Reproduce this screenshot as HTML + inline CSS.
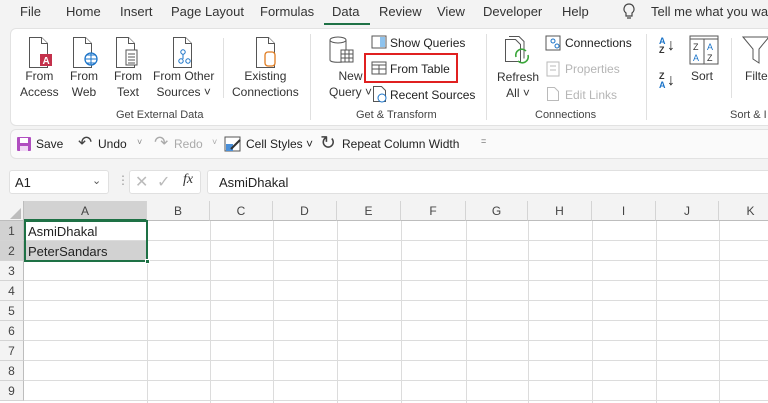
<!DOCTYPE html>
<html><head><meta charset="utf-8"><style>
*{margin:0;padding:0;box-sizing:border-box}
body{width:768px;height:403px;overflow:hidden;background:#f3f3f3;font-family:"Liberation Sans",sans-serif;color:#222;position:relative;font-size:12px}
.a{position:absolute;white-space:nowrap}
.tab{top:4px;font-size:13px;color:#333}
.rb{position:absolute;left:10px;top:28px;width:770px;height:98px;background:#fff;border:1px solid #e2e2e2;border-radius:6px}
.lbl{font-size:12px;color:#333;text-align:center;line-height:16px}
.grp{font-size:11px;color:#444}
.sep{position:absolute;width:1px;background:#e0e0e0}
.ic{position:absolute}
.col{position:absolute;top:201px;height:20px;border-right:1px solid #d4d4d4;text-align:center;font-size:12px;line-height:20px;color:#444;background:#f3f3f3;border-bottom:1px solid #bdbdbd}
.rh{position:absolute;left:0;width:24px;height:20px;text-align:center;font-size:12px;line-height:20px;color:#444;background:#f3f3f3;border-bottom:1px solid #d4d4d4;border-right:1px solid #bdbdbd}
</style></head><body>
<div class="a tab" style="left:20px">File</div>
<div class="a tab" style="left:66px">Home</div>
<div class="a tab" style="left:120px">Insert</div>
<div class="a tab" style="left:171px">Page Layout</div>
<div class="a tab" style="left:260px">Formulas</div>
<div class="a tab" style="left:332px">Data</div>
<div class="a" style="left:324px;top:23px;width:46px;height:2px;background:#1e7145"></div>
<div class="a tab" style="left:379px">Review</div>
<div class="a tab" style="left:437px">View</div>
<div class="a tab" style="left:483px">Developer</div>
<div class="a tab" style="left:562px">Help</div>
<svg class="ic" style="left:622px;top:3px" width="14" height="18"><path d="M7 1a5 5 0 0 0-3 9v3h6v-3a5 5 0 0 0-3-9zM5 15h4" fill="none" stroke="#444" stroke-width="1.2"/></svg>
<div class="a tab" style="left:651px">Tell me what you wa</div>

<div class="rb"></div>
<!-- doc icons -->
<svg class="ic" style="left:28px;top:36px" width="260" height="34">
<g fill="#fff" stroke="#555" stroke-width="1">
<path d="M1.5 1.5h12l6 6v24h-18z"/><path d="M13.5 1.5v6h6"/>
<path d="M45.5 1.5h12l6 6v24h-18z"/><path d="M57.5 1.5v6h6"/>
<path d="M88.5 1.5h12l6 6v24h-18z"/><path d="M100.5 1.5v6h6"/>
<path d="M145.5 1.5h12l6 6v24h-18z"/><path d="M157.5 1.5v6h6"/>
<path d="M228.5 1.5h12l6 6v24h-18z"/><path d="M240.5 1.5v6h6"/>
</g>
<rect x="12" y="18" width="12" height="12" fill="#c4314b"/><text x="14.5" y="28" font-size="10" fill="#fff" font-family="Liberation Sans" font-weight="bold">A</text>
<circle cx="63" cy="23" r="6" fill="#fff" stroke="#1a73c8" stroke-width="1.3"/><path d="M57 23h12M63 17v12M59 19h8M59 27h8" stroke="#1a73c8" fill="none"/>
<rect x="98" y="14" width="11" height="15" fill="#fff" stroke="#555"/><path d="M100 18h7M100 21h7M100 24h7M100 27h7" stroke="#555"/>
<circle cx="155" cy="16" r="2.2" fill="none" stroke="#1a73c8"/><circle cx="153" cy="25" r="2.2" fill="none" stroke="#1a73c8"/><circle cx="160" cy="25" r="2.2" fill="none" stroke="#1a73c8"/><path d="M155 18v5" stroke="#1a73c8"/>
<rect x="237" y="16" width="10" height="14" rx="3" fill="#fff" stroke="#e07b1f" stroke-width="1.3"/>
</svg>
<div class="a lbl" style="left:20px;top:68px">From<br>Access</div>
<div class="a lbl" style="left:70px;top:68px">From<br>Web</div>
<div class="a lbl" style="left:114px;top:68px">From<br>Text</div>
<div class="a lbl" style="left:153px;top:68px">From Other<br>Sources ˅</div>
<div class="sep" style="left:223px;top:38px;height:60px"></div>
<div class="a lbl" style="left:232px;top:68px">Existing<br>Connections</div>
<div class="a grp" style="left:116px;top:109px">Get External Data</div>
<div class="sep" style="left:310px;top:34px;height:86px"></div>
<!-- Get & transform -->
<svg class="ic" style="left:328px;top:35px" width="30" height="34"><path d="M2 5v20c0 3 16 3 16 0V5" fill="#fff" stroke="#555"/><ellipse cx="10" cy="5" rx="8" ry="3" fill="#fff" stroke="#555"/><rect x="13" y="15" width="12" height="12" fill="#fff" stroke="#555"/><path d="M13 19h12M13 23h12M17 15v12M21 15v12" stroke="#555"/></svg>
<div class="a lbl" style="left:329px;top:68px">New<br>Query ˅</div>
<svg class="ic" style="left:371px;top:35px" width="16" height="14"><rect x="1" y="1" width="14" height="12" fill="#fff" stroke="#555"/><rect x="9" y="2" width="5" height="10" fill="#8ec3ee"/></svg>
<div class="a" style="left:390px;top:36px;font-size:12px">Show Queries</div>
<svg class="ic" style="left:371px;top:61px" width="16" height="14"><rect x="1" y="1" width="14" height="12" fill="#fff" stroke="#555"/><path d="M1 4h14M1 8h14M8 4v9" stroke="#555"/></svg>
<div class="a" style="left:390px;top:62px;font-size:12px">From Table</div>
<div class="a" style="left:364px;top:53px;width:94px;height:30px;border:2px solid #e02020"></div>
<svg class="ic" style="left:372px;top:85px" width="16" height="18"><path d="M1.5 1.5h8l4 4v11h-12z" fill="#fff" stroke="#555"/><circle cx="10" cy="13" r="4" fill="#fff" stroke="#1a73c8"/></svg>
<div class="a" style="left:390px;top:88px;font-size:12px">Recent Sources</div>
<div class="a grp" style="left:356px;top:109px">Get &amp; Transform</div>
<div class="sep" style="left:486px;top:34px;height:86px"></div>
<!-- connections -->
<svg class="ic" style="left:503px;top:35px" width="30" height="34"><path d="M2.5 4.5h10l5 5v17h-15z" fill="#fff" stroke="#555"/><path d="M6 1.5h10l5 5v17" fill="none" stroke="#555"/><path d="M13 22a6 6 0 0 1 10-6M25 20a6 6 0 0 1-10 6" fill="none" stroke="#3aa63a" stroke-width="1.6"/></svg>
<div class="a lbl" style="left:497px;top:69px">Refresh<br>All ˅</div>
<svg class="ic" style="left:545px;top:35px" width="16" height="16"><rect x="1" y="1" width="14" height="14" fill="#fff" stroke="#555"/><circle cx="8" cy="6" r="2" fill="none" stroke="#1a73c8"/><circle cx="12" cy="11" r="2" fill="none" stroke="#1a73c8"/></svg>
<div class="a" style="left:565px;top:36px;font-size:12px">Connections</div>
<svg class="ic" style="left:546px;top:61px" width="14" height="16" opacity=".4"><rect x="1" y="1" width="12" height="14" fill="#fff" stroke="#555"/><path d="M4 5h6M4 9h6" stroke="#555"/></svg>
<div class="a" style="left:565px;top:62px;font-size:12px;color:#b5b5b5">Properties</div>
<svg class="ic" style="left:546px;top:86px" width="14" height="16" opacity=".4"><path d="M1.5 1.5h7l4 4v9h-11z" fill="#fff" stroke="#555"/></svg>
<div class="a" style="left:565px;top:88px;font-size:12px;color:#b5b5b5">Edit Links</div>
<div class="a grp" style="left:535px;top:109px">Connections</div>
<div class="sep" style="left:646px;top:34px;height:86px"></div>
<!-- sort -->
<div class="a" style="left:659px;top:37px;font-size:9px;line-height:9px;color:#1a73c8;font-weight:bold">A<br><span style="color:#333">Z</span></div>
<div class="a" style="left:667px;top:37px;font-size:16px">↓</div>
<div class="a" style="left:659px;top:72px;font-size:9px;line-height:9px;color:#333;font-weight:bold">Z<br><span style="color:#1a73c8">A</span></div>
<div class="a" style="left:667px;top:72px;font-size:16px">↓</div>
<svg class="ic" style="left:689px;top:35px" width="30" height="30"><rect x="1" y="1" width="28" height="28" fill="#fff" stroke="#555"/><path d="M1 4h28M15 4v25" stroke="#555"/><text x="4" y="15" font-size="9" fill="#333">Z</text><text x="4" y="26" font-size="9" fill="#1a73c8">A</text><text x="18" y="15" font-size="9" fill="#1a73c8">A</text><text x="18" y="26" font-size="9" fill="#333">Z</text></svg>
<div class="a lbl" style="left:691px;top:68px">Sort</div>
<div class="sep" style="left:731px;top:38px;height:60px"></div>
<svg class="ic" style="left:742px;top:35px" width="30" height="30"><path d="M1 2h26l-10 12v14l-6-4V14z" fill="#fff" stroke="#555"/></svg>
<div class="a lbl" style="left:745px;top:68px">Filte</div>
<div class="a grp" style="left:730px;top:109px">Sort &amp; I</div>

<!-- QAT -->
<div class="a" style="left:10px;top:129px;width:770px;height:30px;background:#fafafa;border:1px solid #e2e2e2;border-radius:6px"></div>
<svg class="ic" style="left:16px;top:136px" width="16" height="16"><rect x="1" y="1" width="14" height="14" rx="1" fill="#b04ec0"/><rect x="4" y="2" width="8" height="5" fill="#fff"/><rect x="4" y="10" width="8" height="5" fill="#f0d8f5"/></svg>
<div class="a" style="left:36px;top:137px">Save</div>
<div class="a" style="left:78px;top:133px;font-size:17px;color:#444">↶</div>
<div class="a" style="left:98px;top:137px">Undo</div>
<div class="a" style="left:137px;top:137px;font-size:9px;color:#888">˅</div>
<div class="a" style="left:154px;top:133px;font-size:17px;color:#aaa">↷</div>
<div class="a" style="left:174px;top:137px;color:#aaa">Redo</div>
<div class="a" style="left:212px;top:137px;font-size:9px;color:#aaa">˅</div>
<svg class="ic" style="left:224px;top:136px" width="18" height="17"><rect x="1" y="1" width="15" height="14" fill="#fff" stroke="#555"/><rect x="2" y="8" width="7" height="7" fill="#4a8fd8"/><path d="M7 13l9-9" stroke="#333" stroke-width="2"/></svg>
<div class="a" style="left:246px;top:137px">Cell Styles ˅</div>
<div class="a" style="left:320px;top:132px;font-size:19px;color:#444">↻</div>
<div class="a" style="left:342px;top:137px">Repeat Column Width</div>
<div class="a" style="left:481px;top:136px;font-size:9px;color:#666">=<br></div>

<!-- formula bar -->
<div class="a" style="left:9px;top:170px;width:100px;height:24px;background:#fff;border:1px solid #e0e0e0;border-radius:3px"></div>
<div class="a" style="left:15px;top:175px;font-size:13px">A1</div>
<div class="a" style="left:92px;top:174px;font-size:11px;color:#555">⌄</div>
<div class="a" style="left:117px;top:173px;color:#999">⋮</div>
<div class="a" style="left:129px;top:170px;width:72px;height:24px;background:#fff;border:1px solid #e0e0e0;border-radius:3px"></div>
<div class="a" style="left:135px;top:172px;font-size:16px;color:#bbb">✕</div>
<div class="a" style="left:157px;top:172px;font-size:16px;color:#bbb">✓</div>
<div class="a" style="left:183px;top:172px;font-size:14px;font-style:italic;font-family:'Liberation Serif',serif;color:#333">fx</div>
<div class="a" style="left:207px;top:170px;width:570px;height:24px;background:#fff;border:1px solid #e0e0e0;border-radius:3px"></div>
<div class="a" style="left:219px;top:175px;font-size:13px">AsmiDhakal</div>

<!-- grid -->
<div class="a" style="left:0;top:221px;width:768px;height:182px;background:#fff;
background-image:linear-gradient(#dcdcdc 1px,transparent 1px);background-size:100% 20px;background-position:0 19px"></div>
<div class="a" style="left:0;top:201px;width:24px;height:20px;background:#f3f3f3;border-right:1px solid #bdbdbd;border-bottom:1px solid #bdbdbd"></div>
<svg class="ic" style="left:8px;top:206px" width="14" height="14"><path d="M13 2V13H2z" fill="#bcbcbc"/></svg>
<div class="col" style="left:24px;width:123px;background:#d2d2d2;border-bottom:2px solid #1e7145">A</div>
<div class="col" style="left:147px;width:63px">B</div>
<div class="col" style="left:210px;width:63px">C</div>
<div class="col" style="left:273px;width:64px">D</div>
<div class="col" style="left:337px;width:64px">E</div>
<div class="col" style="left:401px;width:65px">F</div>
<div class="col" style="left:466px;width:62px">G</div>
<div class="col" style="left:528px;width:64px">H</div>
<div class="col" style="left:592px;width:64px">I</div>
<div class="col" style="left:656px;width:63px">J</div>
<div class="col" style="left:719px;width:64px">K</div>
<div class="a" style="left:147px;top:221px;width:1px;height:182px;background:#dcdcdc"></div>
<div class="a" style="left:210px;top:221px;width:1px;height:182px;background:#dcdcdc"></div>
<div class="a" style="left:273px;top:221px;width:1px;height:182px;background:#dcdcdc"></div>
<div class="a" style="left:337px;top:221px;width:1px;height:182px;background:#dcdcdc"></div>
<div class="a" style="left:401px;top:221px;width:1px;height:182px;background:#dcdcdc"></div>
<div class="a" style="left:466px;top:221px;width:1px;height:182px;background:#dcdcdc"></div>
<div class="a" style="left:528px;top:221px;width:1px;height:182px;background:#dcdcdc"></div>
<div class="a" style="left:592px;top:221px;width:1px;height:182px;background:#dcdcdc"></div>
<div class="a" style="left:656px;top:221px;width:1px;height:182px;background:#dcdcdc"></div>
<div class="a" style="left:719px;top:221px;width:1px;height:182px;background:#dcdcdc"></div>
<div class="rh" style="top:221px;background:#d2d2d2">1</div>
<div class="rh" style="top:241px;background:#d2d2d2">2</div>
<div class="rh" style="top:261px">3</div>
<div class="rh" style="top:281px">4</div>
<div class="rh" style="top:301px">5</div>
<div class="rh" style="top:321px">6</div>
<div class="rh" style="top:341px">7</div>
<div class="rh" style="top:361px">8</div>
<div class="rh" style="top:381px">9</div>
<div class="a" style="left:25px;top:241px;width:122px;height:19px;background:#d2d2d2"></div>
<div class="a" style="left:28px;top:224px;font-size:13px">AsmiDhakal</div>
<div class="a" style="left:28px;top:244px;font-size:13px">PeterSandars</div>
<div class="a" style="left:24px;top:220px;width:124px;height:42px;border:2px solid #1e7145"></div>
<div class="a" style="left:145px;top:259px;width:5px;height:5px;background:#1e7145;border:1px solid #fff"></div>
</body></html>
